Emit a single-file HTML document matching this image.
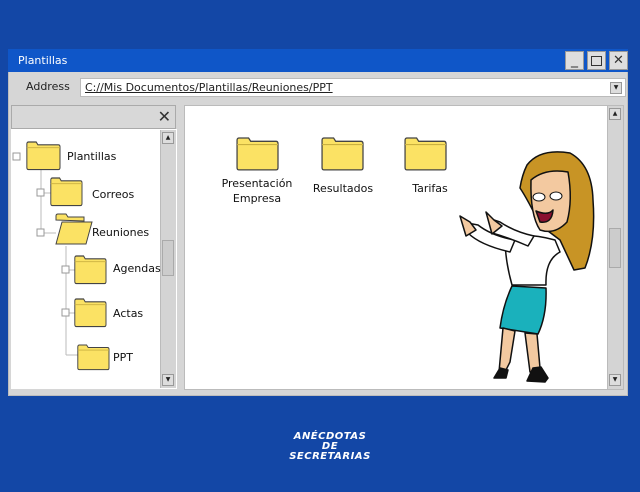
<!DOCTYPE html>
<html><head><meta charset="utf-8"><style>
*{margin:0;padding:0;box-sizing:border-box}
body{width:640px;height:492px;background:#1347a6;position:relative;overflow:hidden;font-family:"DejaVu Sans","Liberation Sans",sans-serif;font-size:11px;color:#111}
.abs{position:absolute}
.win{left:8px;top:49px;width:620px;height:347px;background:#d6d6d6;border:1px solid #bdbdbd}
.title{left:8px;top:49px;width:620px;height:23px;background:#0f56c8;color:#fff;font-size:11px;padding:5px 0 0 10px}
.btn{width:19px;height:19px;background:#dedede;border:1px solid #999;top:51px;text-align:center;color:#333;font-size:14px;line-height:17px}
.white{background:#fff}
.sb{background:#d4d4d4;border-left:1px solid #bbb}
.arr{width:12px;height:12px;background:#ddd;border:1px solid #999;font-size:6px;text-align:center;line-height:10px;color:#222}
.lbl{font-size:11px}
</style></head><body>
<div class="abs win"></div>
<div class="abs title">Plantillas</div>
<div class="abs btn" style="left:565px">_</div>
<div class="abs btn" style="left:587px"><div style="width:11px;height:10px;border:1.5px solid #333;margin:4px auto"></div></div>
<div class="abs btn" style="left:609px;font-size:13px">✕</div>
<div class="abs" style="left:26px;top:80px;font-size:11px;color:#222">Address</div>
<div class="abs white" style="left:80px;top:78px;width:546px;height:19px;border:1px solid #bbb;padding:2px 4px;text-decoration:underline;color:#222">C://Mis Documentos/Plantillas/Reuniones/PPT</div>
<div class="abs arr" style="left:610px;top:82px">▼</div>
<!-- left panel -->
<div class="abs" style="left:11px;top:105px;width:165px;height:24px;background:#d8d8d8;border:1px solid #aaa;text-align:right;padding-right:4px;font-size:16px;line-height:22px;color:#333">✕</div>
<div class="abs white" style="left:11px;top:129px;width:166px;height:260px"></div>
<div class="abs sb" style="left:160px;top:130px;width:16px;height:258px"></div>
<div class="abs arr" style="left:162px;top:132px">▲</div>
<div class="abs arr" style="left:162px;top:374px">▼</div>
<div class="abs" style="left:162px;top:240px;width:12px;height:36px;background:#ccc;border:1px solid #aaa"></div>
<!-- right panel -->
<div class="abs white" style="left:184px;top:105px;width:440px;height:285px;border:1px solid #bbb"></div>
<div class="abs sb" style="left:607px;top:106px;width:16px;height:283px"></div>
<div class="abs arr" style="left:609px;top:108px">▲</div>
<div class="abs arr" style="left:609px;top:374px">▼</div>
<div class="abs" style="left:609px;top:228px;width:12px;height:40px;background:#ccc;border:1px solid #aaa"></div>

<svg class="abs" style="left:0;top:0" width="640" height="492">
<defs>
<g id="f"><path d="M1 5 L1 2 Q1 0 3 0 L12 0 L14 3 L38 3 Q40 3 40 5 L40 27 Q40 29 38 29 L3 29 Q1 29 1 27Z" fill="#fbe264" stroke="#444" stroke-width="1.2"/><line x1="1" y1="6" x2="40" y2="6" stroke="#c9b040" stroke-width="1"/></g>
</defs>
<!-- tree lines -->
<g stroke="#bbb" stroke-width="1" fill="none">
<path d="M41 168 V233 M41 193 H52 M41 233 H56 M66 246 V355 M66 270 H78 M66 313 H78 M66 355 H78"/>
</g>
<g fill="#fff" stroke="#999" stroke-width="1"><rect x="13" y="153" width="7" height="7"/><rect x="37" y="189" width="7" height="7"/><rect x="37" y="229" width="7" height="7"/><rect x="62" y="266" width="7" height="7"/><rect x="62" y="309" width="7" height="7"/></g>
<use href="#f" transform="translate(26,142) scale(0.85,0.95)"/>
<use href="#f" transform="translate(50,178) scale(0.8,0.95)"/>
<path d="M56 220 L56 216 Q56 214 58 214 L66 214 L68 217 L84 217 L84 221 Z" fill="#fbe264" stroke="#444"/>
<path d="M56 244 L62 222 L92 222 L86 244 Z" fill="#fbe264" stroke="#444"/>
<use href="#f" transform="translate(74,256) scale(0.8,0.95)"/>
<use href="#f" transform="translate(74,299) scale(0.8,0.95)"/>
<use href="#f" transform="translate(77,345) scale(0.8,0.85)"/>
<use href="#f" transform="translate(236,138) scale(1.05,1.1)"/>
<use href="#f" transform="translate(321,138) scale(1.05,1.1)"/>
<use href="#f" transform="translate(404,138) scale(1.05,1.1)"/>
<!-- woman -->
<g stroke="#111" stroke-width="1.5" stroke-linejoin="round">
<path d="M527 165 Q540 148 570 153 Q592 165 593 200 Q596 240 585 268 L574 270 L560 240 L540 225 Q528 200 520 188 Q522 175 527 165Z" fill="#c89425"/>
<path d="M531 180 Q545 168 568 172 Q573 200 567 222 Q555 235 540 230 Q530 215 531 180Z" fill="#f3c9a0"/>
<path d="M536 211 Q548 216 553 210 Q552 224 540 222Z" fill="#8a1030"/>
<ellipse cx="539" cy="197" rx="6" ry="4" fill="#fff" stroke-width="1"/><ellipse cx="556" cy="196" rx="6" ry="4" fill="#fff" stroke-width="1"/>
<path d="M505 238 Q525 232 555 240 L560 252 Q545 260 546 285 L512 285 Q505 260 505 238Z" fill="#fff"/>
<path d="M462 222 L468 233 Q480 245 510 252 L515 240 Q492 236 478 225Z" fill="#fff"/>
<path d="M488 218 L492 233 Q510 238 528 246 L534 236 Q515 232 500 222Z" fill="#fff"/>
<path d="M460 216 L470 222 L476 230 L466 236 Z" fill="#f3c9a0"/>
<path d="M486 212 L494 220 L502 226 L492 234 Z" fill="#f3c9a0"/>
<path d="M512 286 L546 288 Q547 315 538 334 L500 328 Q503 305 512 286Z" fill="#1ab1bc"/>
<path d="M503 328 L515 331 L510 362 L505 372 L499 372 Z M525 333 L537 334 L540 368 L535 372 L530 372 Z" fill="#f3c9a0"/>
<path d="M494 378 L500 368 L508 370 L506 378 Z M527 381 L533 368 L541 367 L548 378 L545 382 Z" fill="#111"/>
</g>
</svg>
<div class="abs lbl" style="left:67px;top:150px">Plantillas</div>
<div class="abs lbl" style="left:92px;top:188px">Correos</div>
<div class="abs lbl" style="left:92px;top:226px">Reuniones</div>
<div class="abs lbl" style="left:113px;top:262px">Agendas</div>
<div class="abs lbl" style="left:113px;top:307px">Actas</div>
<div class="abs lbl" style="left:113px;top:351px">PPT</div>
<div class="abs lbl" style="left:214px;top:176px;width:86px;text-align:center;line-height:15px">Presentación<br>Empresa</div>
<div class="abs lbl" style="left:310px;top:182px;width:66px;text-align:center">Resultados</div>
<div class="abs lbl" style="left:400px;top:182px;width:60px;text-align:center">Tarifas</div>
<div class="abs" style="left:280px;top:432px;width:100px;text-align:center;color:#fff;font-weight:bold;font-style:italic;font-size:10px;line-height:10px;font-family:'DejaVu Sans',sans-serif;letter-spacing:0.5px">ANÉCDOTAS<br>DE<br>SECRETARIAS</div>
</body></html>
